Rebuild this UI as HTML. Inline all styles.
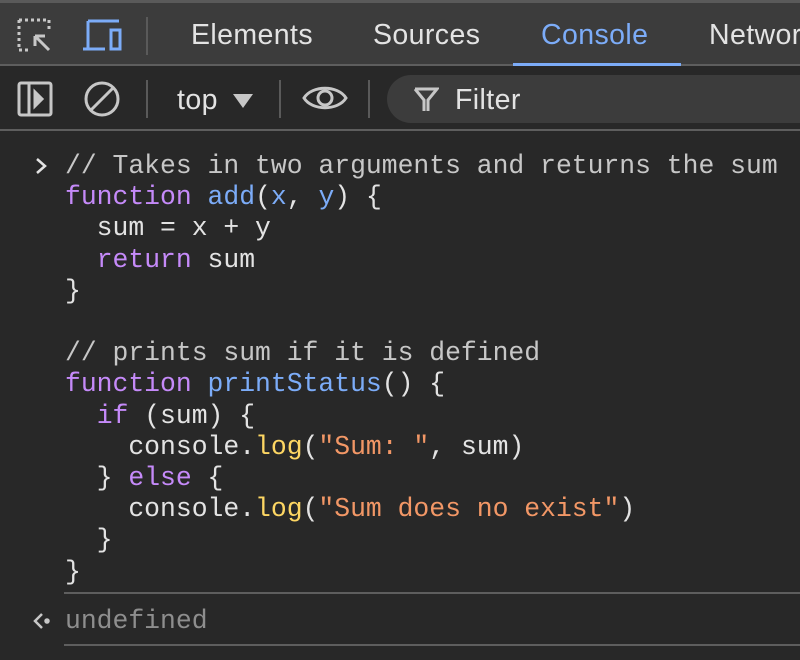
<!DOCTYPE html>
<html><head><meta charset="utf-8"><style>
body{margin:0;width:800px;height:660px;overflow:hidden;background:#282828;font-family:"Liberation Sans",sans-serif;position:relative}
.tabs{position:absolute;left:0;top:0;width:800px;height:66px;background:#3c3c3c;border-top:3px solid #5a5a5a;box-sizing:border-box;border-bottom:2px solid #5e5e5e}
.tab{position:absolute;top:16px;font-size:28.5px;letter-spacing:0.4px;color:#e3e3e3}
.tool{position:absolute;left:0;top:66px;width:800px;height:65px;background:#282828;border-bottom:2px solid #5e5e5e;box-sizing:border-box}
.sep{position:absolute;width:2px;background:#5a5a5a}
pre{position:absolute;left:65px;top:151px;margin:0;font-family:"Liberation Mono","DejaVu Sans Mono",monospace;font-size:26.4px;line-height:31.2px;color:#e3e3e3}
.k{color:#c58af9}.f{color:#7cacf8}.c{color:#c7c7c7}.s{color:#f29766}.l{color:#fdd663}
.hr{position:absolute;left:64px;right:0;height:2px;background:#5e5e5e}
</style></head><body>
<div class="tabs">
<svg style="position:absolute;left:16px;top:14px" width="40" height="38" viewBox="0 0 40 38" fill="none" stroke="#c7c7c7" stroke-width="3"><path d="M3 3h30M3 3v30M3 33h10M33 3v10" stroke-dasharray="3 3"/><path d="M19 19l14 14M19 19h10M19 19v10"/></svg>
<svg style="position:absolute;left:82px;top:16px" width="42" height="34" viewBox="0 0 42 34" fill="none" stroke="#7cacf8" stroke-width="3"><path d="M6 2h31M6 2v28M1 30h22"/><rect x="29" y="11" width="9" height="19"/></svg>
<div class="sep" style="left:146px;top:14px;height:38px"></div>
<div class="tab" style="left:191px">Elements</div>
<div class="tab" style="left:373px">Sources</div>
<div class="tab" style="left:541px;color:#7cacf8">Console</div>
<div class="tab" style="left:709px">Network</div>
<div style="position:absolute;left:513px;top:60px;width:168px;height:5px;background:#7cacf8"></div>
</div>
<div class="tool">
<svg style="position:absolute;left:17px;top:15px" width="36" height="36" viewBox="0 0 36 36" fill="none" stroke="#c7c7c7" stroke-width="3"><rect x="2" y="2" width="32" height="32" rx="2"/><path d="M12 2v32"/><path d="M18 11l7 7-7 7z" fill="#c7c7c7"/></svg>
<svg style="position:absolute;left:83px;top:14px" width="38" height="38" viewBox="0 0 38 38" fill="none" stroke="#c7c7c7" stroke-width="3"><circle cx="19" cy="19" r="16"/><path d="M8 30L30 8"/></svg>
<div class="sep" style="left:146px;top:14px;height:38px"></div>
<div class="tab" style="left:177px;top:18px">top</div>
<svg style="position:absolute;left:233px;top:28px" width="20" height="14"><path d="M0 0h20L10 14z" fill="#c7c7c7"/></svg>
<div class="sep" style="left:279px;top:14px;height:38px"></div>
<svg style="position:absolute;left:302px;top:17px" width="46" height="30" viewBox="0 0 46 30" fill="none" stroke="#c7c7c7" stroke-width="3"><path d="M2 15C10 2 36 2 44 15C36 28 10 28 2 15z"/><circle cx="23" cy="15" r="7"/></svg>
<div class="sep" style="left:368px;top:14px;height:38px"></div>
<div style="position:absolute;left:387px;top:9px;width:440px;height:48px;border-radius:24px;background:#3c3c3c"></div>
<svg style="position:absolute;left:413px;top:21px" width="26" height="26" viewBox="0 0 26 26" fill="none" stroke="#c7c7c7" stroke-width="3"><path d="M2 2h22l-9 11v11M11 24V13L2 2"/></svg>
<div class="tab" style="left:455px;top:18px">Filter</div>
</div>
<svg style="position:absolute;left:35px;top:157px" width="14" height="18" fill="none" stroke="#e3e3e3" stroke-width="2.5"><path d="M2 2l8 7-8 7"/></svg>
<pre><span class="c">// Takes in two arguments and returns the sum</span>
<span class="k">function</span> <span class="f">add</span>(<span class="f">x</span>, <span class="f">y</span>) {
  sum = x + y
  <span class="k">return</span> sum
}

<span class="c">// prints sum if it is defined</span>
<span class="k">function</span> <span class="f">printStatus</span>() {
  <span class="k">if</span> (sum) {
    console.<span class="l">log</span>(<span class="s">"Sum: "</span>, sum)
  } <span class="k">else</span> {
    console.<span class="l">log</span>(<span class="s">"Sum does no exist"</span>)
  }
}</pre>
<div class="hr" style="top:592px"></div>
<svg style="position:absolute;left:32px;top:612px" width="20" height="18" fill="none" stroke="#c7c7c7" stroke-width="2.5"><path d="M10 2L3 9l7 7"/><circle cx="15" cy="9" r="1.5" fill="#c7c7c7"/></svg>
<pre style="top:606px;color:#8e8e8e">undefined</pre>
<div class="hr" style="top:644px"></div>
</body></html>
